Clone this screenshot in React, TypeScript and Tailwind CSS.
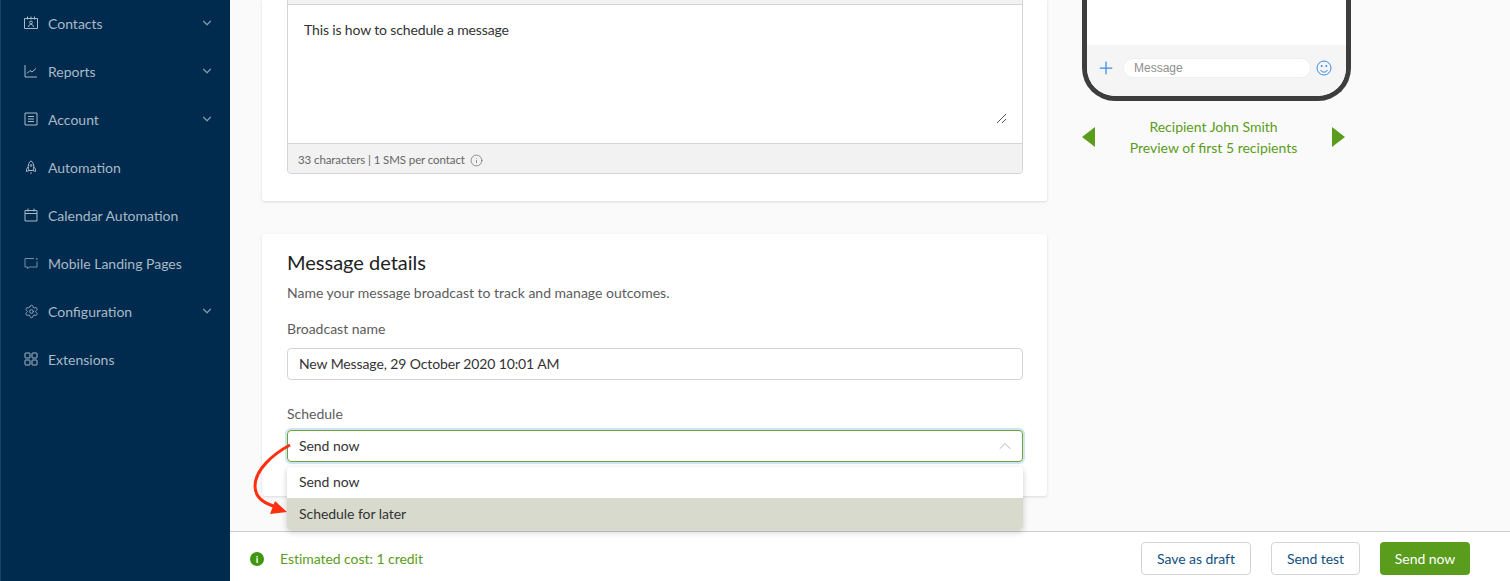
import { ChevronDown, ChevronUp, Settings, Plus, Info } from "lucide-react";
import type { ReactNode } from "react";

const iconProps = {
  width: 14,
  height: 14,
  viewBox: "0 0 14 14",
  fill: "none",
  stroke: "currentColor",
  strokeWidth: 1,
};

const navItems: { label: string; chevron?: boolean; icon: ReactNode }[] = [
  {
    label: "Contacts",
    chevron: true,
    icon: (
      <svg {...iconProps}>
        <path d="M.5 2.500h13v10H.5z" />
        <path d="M3.500.5v3M7 .5v3M10.500.5v3" />
        <circle cx="7" cy="6.500" r="1.400" />
        <path d="M4.500 11c.3-2 1.200-2.600 2.500-2.600s2.200.6 2.500 2.600" />
      </svg>
    ),
  },
  {
    label: "Reports",
    chevron: true,
    icon: (
      <svg {...iconProps}>
        <path d="M1 1v12h12" />
        <path d="M3 9.500l3-3 2 1.500 4-3.500" />
      </svg>
    ),
  },
  {
    label: "Account",
    chevron: true,
    icon: (
      <svg {...iconProps}>
        <path d="M1 1h12v12H1z" />
        <path d="M4 4.500h6M4 7h6M4 9.500h6" />
      </svg>
    ),
  },
  {
    label: "Automation",
    icon: (
      <svg {...iconProps}>
        <path d="M7 .8C5 2.500 4.200 4.500 4.200 6.500c0 1.500.3 3 .9 4h3.800c.6-1 .9-2.500.9-4 0-2-.8-4-2.800-5.700z" />
        <path d="M4.200 6.800L2.500 9.300v2.200l2.600-1M9.800 6.800l1.700 2.500v2.200l-2.600-1M6 12.700c.5.600 1.500.6 2 0" />
        <circle cx="7" cy="5.500" r=".9" />
      </svg>
    ),
  },
  {
    label: "Calendar Automation",
    icon: (
      <svg {...iconProps}>
        <path d="M1 2.500h12v10.500H1zM1 5.500h12" />
        <path d="M4 .5v3M10 .5v3" />
      </svg>
    ),
  },
  {
    label: "Mobile Landing Pages",
    icon: (
      <svg {...iconProps} className="opacity-70">
        <path d="M10 2.500H1v8.500h2.500v1.500L5.500 11H13V5.500" />
        <path d="M12 2.500h1v1.500" />
      </svg>
    ),
  },
  {
    label: "Configuration",
    chevron: true,
    icon: <Settings size={15} strokeWidth={1.3} />,
  },
  {
    label: "Extensions",
    icon: (
      <svg {...iconProps}>
        <rect x="1" y="1" width="5" height="5" rx=".6" />
        <rect x="8" y="1" width="5" height="5" rx=".6" />
        <rect x="1" y="8" width="5" height="5" rx=".6" />
        <rect x="8" y="8" width="5" height="5" rx=".6" />
      </svg>
    ),
  },
];

function Sidebar() {
  return (
    <aside className="w-[230px] h-full shrink-0 bg-[#002b4f] border-l border-l-[#1c4263] text-[#a9b9c6] text-[14px]">
      <div className="-mt-px">
        {navItems.map((item) => (
          <div key={item.label} className="h-[48px] flex items-center pl-[23px] pr-[16px]">
            <span className="w-[24px] flex items-center">{item.icon}</span>
            <span className="flex-1">{item.label}</span>
            {item.chevron && <ChevronDown size={14} strokeWidth={2.2} className="text-[#8298ab]" />}
          </div>
        ))}
      </div>
    </aside>
  );
}

function PhonePreview() {
  return (
    <div className="w-[269px] shrink-0 ml-[35px]">
      <div className="h-[101px] border-x-[5px] border-b-[5px] border-[#3d3d3d] rounded-b-[33px] overflow-hidden bg-white flex flex-col">
        <div className="h-[45px] shrink-0" />
        <div className="flex-1 bg-[#f5f5f5] flex items-center pl-[9px] pr-[14px] pb-[5px]">
          <Plus size={20} strokeWidth={1.5} className="text-[#3b8ae6]" />
          <div className="ml-[7px] flex-1 h-[20px] rounded-full bg-white border border-[#eeeeee] pl-[10px] flex items-center text-[12px] text-[#8f8f8f] font-['Liberation_Sans',sans-serif]">
            Message
          </div>
          <svg className="ml-[5px]" width="16" height="16" viewBox="0 0 16 16" fill="none" stroke="#3b8ae6" strokeWidth="1">
            <circle cx="8" cy="8" r="7" />
            <path d="M4.500 10c.8 1.500 2 2.100 3.500 2.100s2.700-.6 3.500-2.100" />
            <circle cx="5.700" cy="6" r="1" fill="#3b8ae6" stroke="none" />
            <circle cx="10.300" cy="6" r="1" fill="#3b8ae6" stroke="none" />
          </svg>
        </div>
      </div>
      <div className="flex items-center justify-between mt-[15px] text-[#5a9c1b] text-[14px] leading-[21px] text-center">
        <div className="w-0 h-0 border-y-[10px] border-y-transparent border-r-[13px] border-r-[#5a9c1b]" />
        <div>
          <div>Recipient John Smith</div>
          <div>Preview of first 5 recipients</div>
        </div>
        <div className="w-0 h-0 border-y-[10px] border-y-transparent border-l-[13px] border-l-[#5a9c1b] mr-[6px]" />
      </div>
    </div>
  );
}

function MessageCard() {
  return (
    <section className="bg-white rounded-b-[3px] shadow-[0_1px_3px_rgba(0,0,0,0.13)] pl-[25px] pr-[24px] pb-[27px]">
      <div className="h-[174px] border border-[#d4d4d4] rounded-b-[4px] flex flex-col">
        <div className="h-[4px] bg-[#f2f2f2] border-b border-[#d4d4d4] box-content -mt-px" />
        <div className="flex-1 relative px-[16px] pt-[14px] text-[14px] tracking-[-0.14px] text-[#333333]">
          This is how to schedule a message
          <svg className="absolute right-[16px] bottom-[20px]" width="9" height="9" viewBox="0 0 9 9" stroke="#555555" strokeWidth="1">
            <path d="M0 9L9 0M5 9l4-4" />
          </svg>
        </div>
        <div className="h-[30px] bg-[#f2f2f2] border-t border-[#d4d4d4] rounded-b-[4px] flex items-center gap-[5px] px-[10px] pt-[3px] text-[11.500px] tracking-[-0.1px] text-[#666666]">
          33 characters | 1 SMS per contact
          <Info size={13} strokeWidth={1.3} />
        </div>
      </div>
    </section>
  );
}

function DetailsCard() {
  return (
    <section className="mt-[33px] h-[262px] bg-white rounded-[3px] shadow-[0_1px_3px_rgba(0,0,0,0.13)] pl-[25px] pr-[24px] pt-[16px]">
      <h2 className="text-[20px] leading-[26px] text-[#222222] -mt-px">Message details</h2>
      <p className="mt-[8px] text-[14px] leading-[20px] text-[#5c5c5c]">
        Name your message broadcast to track and manage outcomes.
      </p>
      <div className="mt-[16px] text-[14px] leading-[20px] text-[#5c5c5c]">Broadcast name</div>
      <div className="mt-[9px] h-[32px] border border-[#d4d4d4] rounded-[4px] px-[11px] pb-[2px] flex items-center text-[14px] tracking-[-0.11px] text-[#333333]">
        New Message, 29 October 2020 10:01 AM
      </div>
      <div className="mt-[24px] text-[14px] leading-[20px] text-[#5c5c5c]">Schedule</div>
      <div className="relative mt-[6px]">
        <div className="h-[32px] border border-[#6aa632] rounded-[4px] shadow-[0_0_0_2px_#cfe4f5] pl-[11px] pr-[7px] flex items-center justify-between text-[14px] tracking-[-0.05px] text-[#333333]">
          <span className="pb-[2px]">Send now</span>
          <ChevronUp size={20} strokeWidth={0.9} className="text-[#9a9a9a]" />
        </div>
        <div className="absolute z-10 top-[37px] left-0 right-0 bg-white rounded-[4px] shadow-[0_2px_6px_rgba(0,0,0,0.2)] overflow-hidden text-[14px] tracking-[-0.05px] text-[#333333]">
          <div className="h-[31px] px-[12px] pb-[2px] flex items-center">Send now</div>
          <div className="h-[32px] px-[12px] pb-[2px] flex items-center bg-[#d8dace]">Schedule for later</div>
        </div>
        <svg className="absolute z-20 left-[-34px] top-[8px]" width="40" height="78" viewBox="0 0 40 78" fill="none">
          <path d="M37 7C20 16 2 32 2 48c0 12 10 18 22 21" stroke="#ff2f0f" strokeWidth="3" />
          <path d="M17 76l17-2-12-11z" fill="#ff2f0f" />
        </svg>
      </div>
    </section>
  );
}

function Footer() {
  return (
    <footer className="h-[50px] shrink-0 bg-white border-t border-[#cccccc] flex items-center pl-[20px] pr-[40px] pt-[4px] text-[14px] tracking-[-0.05px]">
      <span className="w-[14px] h-[14px] rounded-full bg-[#3f960f] text-white flex items-center justify-center text-[10px] font-bold leading-none">
        i
      </span>
      <span className="ml-[16px] flex-1 text-[#5a9c1b]">Estimated cost: 1 credit</span>
      <button className="w-[110px] h-[33px] bg-white border border-[#d4d4d4] rounded-[4px] text-[#11507f]">Save as draft</button>
      <button className="ml-[20px] w-[89px] h-[33px] bg-white border border-[#d4d4d4] rounded-[4px] text-[#11507f]">Send test</button>
      <button className="ml-[20px] w-[90px] h-[33px] bg-[#5a9c1b] rounded-[4px] text-white">Send now</button>
    </footer>
  );
}

export default function App() {
  return (
    <div className="w-[1510px] h-[581px] flex overflow-hidden font-['Lato',sans-serif]">
      <Sidebar />
      <main className="flex-1 min-w-0 flex flex-col bg-[#fafafa]">
        <div className="flex-1 min-h-0 flex pl-[32px]">
          <div className="w-[785px] shrink-0">
            <MessageCard />
            <DetailsCard />
          </div>
          <PhonePreview />
        </div>
        <Footer />
      </main>
    </div>
  );
}
